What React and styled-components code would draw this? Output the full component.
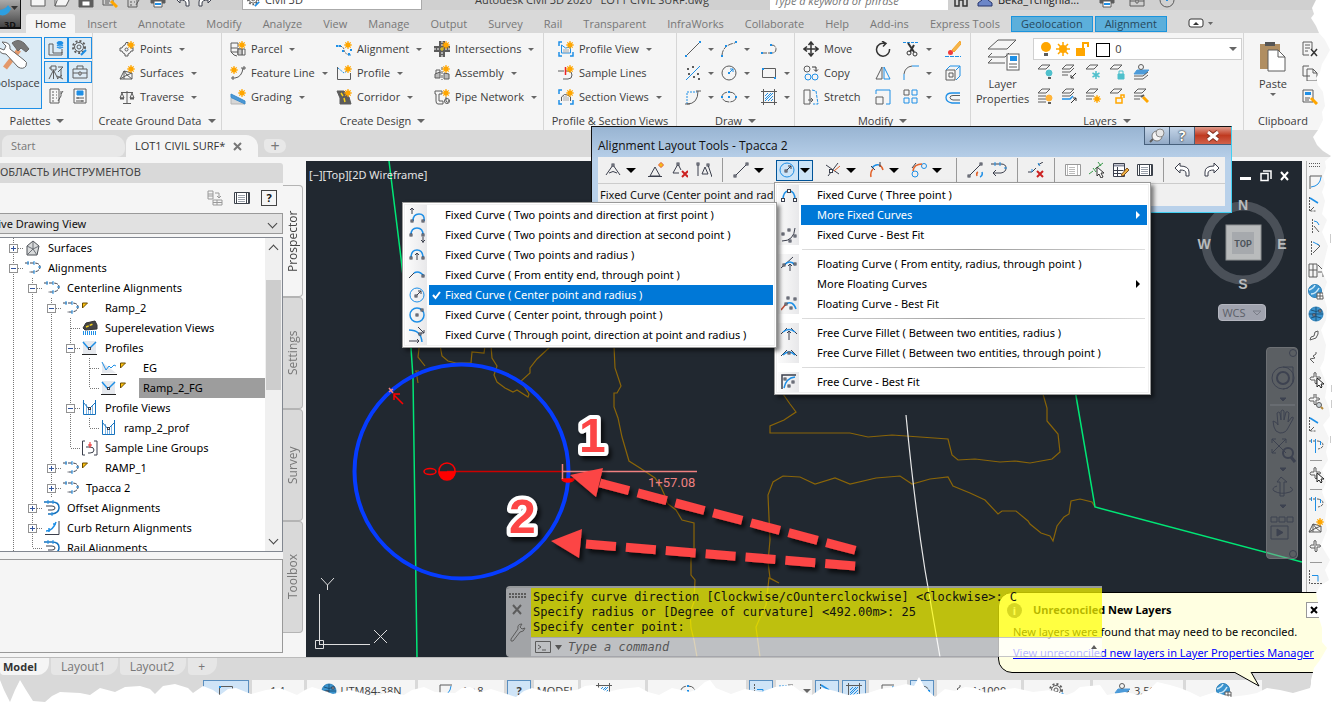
import React from 'react';
import styled, { createGlobalStyle, css } from 'styled-components';

const GRAY = '#5c5c5c';
const BLUE = '#1e8fe6';
const ORANGE = '#ffa600';
const TEAL = '#4fc0cc';
const INK = '#3b3f4c';

/* Icons */
const Burst = ({ x = 12, y = 4 }) => (
	<g transform={`translate(${x} ${y})`} stroke={ORANGE} strokeWidth="1.2">
		<circle r="2" fill={ORANGE} />
		<path d="M0-4V4M-4 0H4M-2.7-2.7L2.7 2.7M-2.7 2.7L2.7-2.7" />
	</g>
);

const Dots = ({ at, color = INK, size = 3 }) =>
	at.map(([x, y]) => (
		<rect
			key={`${x}-${y}`}
			x={x - size / 2}
			y={y - size / 2}
			width={size}
			height={size}
			fill="#fff"
			stroke={color}
		/>
	));

const BlueDots = ({ at }) =>
	at.map(([x, y]) => (
		<rect key={`${x}-${y}`} x={x - 1} y={y - 1} width="2" height="2" fill={BLUE} stroke="none" />
	));

const sheet = 'M5 1H13L9 5H1Z';

const icons = {
	points: (
		<>
			<path d="M7 1.500h2V4a4 4 0 0 1 3 3h2v3h-2a4 4 0 0 1-3 3v2H6v-2a4 4 0 0 1-3-3H1V7h2a4 4 0 0 1 3-3z" />
			<circle cx="7.500" cy="8.500" r="1.500" />
			<Burst />
		</>
	),
	surfaces: (
		<>
			<path d="M1 14L5 6l8 2v6zM5 6l3 4 5-2M8 10l5 4M8 10l-7 4M5 6V14" />
			<Burst />
		</>
	),
	traverse: (
		<>
			<path d="M8 2V14M4 14.500h8M2 3.500h12M3 4L1 9h4zM13 4l-2 5h4z" />
			<path d="M1 9.500h4M11 9.500h4" strokeWidth="2" />
		</>
	),
	parcel: (
		<>
			<path d="M1 2h7v4M1 2v9q3 4 6 4M1 7h7v7M8 8h7v6h-3M12 8v6M1 11h7" />
			<path d="M8 8h4v6H8z" fill="#c9c9c9" />
			<Burst />
		</>
	),
	feature: (
		<>
			<path d="M1 13h4q7-1 8-10M11 3h5M3 11v4M14 1v4" />
			<Burst x={4} y={5} />
		</>
	),
	grading: (
		<>
			<path d="M1 9v6h14" fill="#d6d6d6" stroke="#b5b5b5" />
			<path d="M1 5l14 7v3L1 8.500z" fill="#4a98d6" stroke="#3d8bc8" />
			<Burst />
		</>
	),
	alignment: (
		<>
			<path d="M4 5q4 1 4 4t5 5" strokeDasharray="2 1" />
			<BlueDots at={[[1, 5], [4, 5], [7, 10], [13, 13], [15, 9]]} />
			<path d="M0 5h5M12 14h3" stroke={BLUE} />
			<Burst />
		</>
	),
	profile: (
		<>
			<path d="M1.500 2v12.500h13V8" />
			<path d="M2 3l6 5 3-2" stroke={BLUE} strokeDasharray="2 1" />
			<Burst />
		</>
	),
	corridor: (
		<>
			<path d="M1 2h7l5 6 2 7H4V9z" fill={GRAY} />
			<path d="M5 4l2 3M8 9l1 4" stroke="#f6d31c" strokeWidth="1.500" />
			<Burst />
		</>
	),
	intersections: (
		<>
			<path d="M8 0v16M0 8h16" strokeWidth="6" />
			<path d="M8 0v5M8 11v5M0 8h5M11 8h5" stroke="#fff" strokeDasharray="2 1" />
			<path d="M8 6v4M6 8h4" stroke="#f6d31c" />
			<Burst />
		</>
	),
	assembly: (
		<>
			<path d="M8 2v13" strokeDasharray="3 1" />
			<path d="M1 9l5-2v6H1zM10 8l5 1v5h-5z" fill="#bbb" />
			<path d="M2 9V5h4v3" />
			<Burst />
		</>
	),
	pipe: (
		<>
			<path d="M1 2h7v3H5v7h4v3H4q-2 0-2-3V5H1zM12 8v4q2 3 3-1" />
			<circle cx="13" cy="12" r="2.500" />
			<Burst />
		</>
	),
	profileView: (
		<>
			<path d="M1 5V1h3M1 11v4h3M12 15h3v-4" stroke={BLUE} strokeWidth="1.500" />
			<path d="M3.500 12V4l4 3 5-1v6z" stroke={BLUE} />
			<path d="M6 8v4M8 8v4M10 8v4" stroke="#aaa" />
			<Burst />
		</>
	),
	sampleLines: (
		<>
			<path d="M0 6h6M7 6h3q4 0 4 4t-4 4H5" />
			<path d="M7.500 2v8" stroke="#e22" strokeWidth="1.500" />
			<Burst />
		</>
	),
	sectionView: (
		<>
			<path d="M1 5V1h3M1 11v4h3M12 15h3v-4" stroke={BLUE} strokeWidth="1.500" />
			<path d="M3.500 12V8q3-4 6-2l3 2v4" />
			<path d="M6 7v5M8 7v5M10 8v4" stroke="#aaa" />
			<Burst />
		</>
	),
	line: (
		<>
			<path d="M2 14L14 2" />
			<BlueDots at={[[1, 15], [15, 1]]} />
		</>
	),
	arc: (
		<>
			<path d="M1 14Q2 4 14 2" strokeDasharray="5 1" />
			<BlueDots at={[[1, 15], [5, 5], [15, 1]]} />
		</>
	),
	polyline: (
		<>
			<path d="M1 12h9M10 4q5 0 5 4t-4 4" strokeDasharray="5 1" />
			<BlueDots at={[[1, 12], [10, 4], [10, 12]]} />
		</>
	),
	construct: (
		<>
			<path d="M1 15L15 1" stroke={BLUE} />
			<path d="M2 4h2M3 9h2M7 2h2M8 12h2M12 9h2M13 14h2" strokeWidth="2" />
		</>
	),
	circle: (
		<>
			<circle cx="8" cy="8" r="7" />
			<path d="M8 8l4-4M9 4h3v3" stroke={BLUE} />
			<BlueDots at={[[8, 8]]} />
		</>
	),
	rect: (
		<>
			<path d="M1.500 3.500h13v9h-13z" />
			<BlueDots at={[[2, 4], [14, 13]]} />
		</>
	),
	spline: (
		<>
			<path d="M2 15V3h10" stroke={BLUE} strokeDasharray="2 1" />
			<path d="M2 15q11 0 11-13M0 15h5M11 2h5" />
		</>
	),
	ellipse: (
		<>
			<ellipse cx="8" cy="8" rx="7" ry="5" strokeDasharray="8 1" />
			<BlueDots at={[[8, 8], [1, 8], [15, 8], [8, 3]]} />
		</>
	),
	hatch: (
		<>
			<path d="M2.500 0v16M13.500 0v16M0 2.500h16M0 13.500h16" />
			<path d="M4 7l3-3M4 10l6-6M4 12l8-8M7 12l5-5M10 12l2-2" stroke={BLUE} />
		</>
	),
	move: (
		<path
			d="M8 1v14M1 8h14M5.500 4L8 1l2.500 3M5.500 12L8 15l2.500-3M4 5.500L1 8l3 2.500M12 5.500L15 8l-3 2.500"
			stroke="#333"
			strokeWidth="1.500"
		/>
	),
	copy: (
		<>
			<circle cx="4" cy="4" r="3" />
			<circle cx="5" cy="12" r="3" stroke={BLUE} />
			<circle cx="12" cy="12" r="3" stroke={BLUE} />
			<path d="M9 2h4v4M11 4.500l2 2 2-2" stroke="#333" />
		</>
	),
	stretch: (
		<>
			<path d="M1 1h6v14H1zM5 11h5M8 9l2 2-2 2" />
			<path d="M9 1l4 1 2 13h-5" stroke={BLUE} strokeDasharray="3 1" />
		</>
	),
	rotate: <path d="M10 2.500A6.500 6.500 0 1 0 14.500 8M7 0l4 2.500-3 3" stroke="#333" strokeWidth="1.500" />,
	mirror: (
		<>
			<path d="M7 2v12H1z" />
			<path d="M9 2v12h6z" stroke={BLUE} />
		</>
	),
	scale: (
		<>
			<path d="M1 8h7v7H1z" />
			<path d="M1 5V1h14v14h-4" stroke={BLUE} />
		</>
	),
	trim: (
		<>
			<path d="M0 1.500h16" stroke={BLUE} strokeDasharray="3 1" />
			<path d="M5 2l6 9M11 4L7 11" stroke="#333" strokeWidth="2" />
			<circle cx="6" cy="12" r="2" stroke="#333" />
			<circle cx="12" cy="13" r="2" stroke="#333" />
		</>
	),
	fillet: (
		<>
			<path d="M1 9Q2 2 9 1" />
			<path d="M1 15V9M9 1h7" stroke={BLUE} />
		</>
	),
	array: (
		<>
			<path d="M1 1h5v5H1z" />
			<path d="M9 1h5v5H9zM1 9h5v5H1zM9 9h5v5H9z" stroke={BLUE} />
		</>
	),
	erase: (
		<>
			<path d="M0 15.500h16" stroke={BLUE} strokeDasharray="4 1" />
			<path d="M15 0L7 9l2 2 7-8z" fill="#f5b54a" stroke="#f5a52a" />
			<circle cx="5.500" cy="11.500" r="2.500" fill="#f03a3a" stroke="none" />
		</>
	),
	explode: (
		<>
			<path d="M1 5h9v10H1z" />
			<path d="M1 5l4-4h10v10l-4 4M15 1l-4 4" stroke={BLUE} />
			<path d="M4 8h4v4H4z" />
		</>
	),
	offset: (
		<>
			<path d="M15 4H7Q1 4 1 8.500T7 14h8" stroke={BLUE} strokeWidth="1.300" />
			<path d="M15 6.500H8q-3 0-3 2t3 2.500h7" />
		</>
	),
	layBulb: (
		<>
			<path d={sheet} />
			<circle cx="12" cy="9" r="3" fill={TEAL} stroke={TEAL} />
			<path d="M11 14h3" strokeWidth="2" />
		</>
	),
	layArrow: (
		<>
			<path d={sheet} />
			<path d="M1 8h8l4-4M1 11h6" />
			<path d="M15 9l-5 5M10 11v3h3" stroke="#333" />
		</>
	),
	layFreeze: (
		<>
			<path d={sheet} />
			<path d="M11 7v8M7.500 9l7 4M7.500 13l7-4" stroke={TEAL} strokeWidth="1.500" />
		</>
	),
	layLock: (
		<>
			<path d={sheet} />
			<path d="M9 10h6v5H9z" fill={TEAL} stroke={TEAL} />
			<path d="M10 10V7h4v3" stroke={TEAL} />
		</>
	),
	layMatch: (
		<>
			<path d="M4 6h12l-4 4H1z" fill="#4d9bd9" stroke="#4d9bd9" />
			<path d="M1 12h9l5-4M1 15h9l5-4" />
			<circle cx="8" cy="3" r="2.500" />
		</>
	),
	layOn: (
		<>
			<path d="M5 1H13L9 5H1ZM1 8h8M1 11h8M1 14h8" />
			<circle cx="12" cy="10" r="3" fill="#ffb43a" stroke="#ffb43a" />
			<path d="M11 15h3" strokeWidth="2" />
		</>
	),
	layWalk: (
		<>
			<path d={sheet} />
			<path d="M1 8h8l4-4" />
			<path d="M1 11h8l3-3" stroke={BLUE} strokeWidth="1.500" />
			<path d="M10 15l5-5M12 10h3v3" stroke="#333" />
		</>
	),
	laySun: (
		<>
			<path d="M5 1H13L9 5H1ZM1 8h8M1 11h6" />
			<Burst x={12} y={11} />
		</>
	),
	layUnlock: (
		<>
			<path d={sheet} />
			<path d="M7 10h6v5H7zM12 10V7h3v3" stroke={ORANGE} strokeWidth="1.500" />
		</>
	),
	layBrush: (
		<>
			<path d="M5 1H13L9 5H1ZM1 8h8M1 11h6" />
			<path d="M10 9l5 5" stroke={ORANGE} strokeWidth="3" />
			<path d="M8 9l3-2" strokeWidth="2" />
		</>
	),
	cut: (
		<>
			<path d="M1 1h9v7M1 1v13h6M3 4h5M3 7h5M3 10h3" />
			<path d="M9 8l6 7M15 8l-6 7" stroke="#333" strokeWidth="1.500" />
		</>
	),
	copyClip: <path d="M8 11H1V1h6M5 4h6l4 4v8H5zM11 4v4h4" />,
	matchProp: (
		<>
			<path d="M1 1h10v12H1z" />
			<path d="M3 3h6v3H3z" fill={BLUE} stroke="none" />
			<path d="M3 9h5M3 11h4" />
			<path d="M9 9l6 6" stroke={ORANGE} strokeWidth="3" />
		</>
	),
	file: <path d="M1 2h14v12H1z" fill="#f5f5f5" />,
	folder: <path d="M1 14L4 6h12l-4 8zM1 14V3h5" fill="#f5f5f5" />,
	disk: (
		<>
			<path d="M1 1h14v14H1z" fill={GRAY} />
			<path d="M4 9h8v5H4z" fill="#fff" />
		</>
	),
	plotter: (
		<>
			<path d="M1 5h14v6H1z" fill={GRAY} />
			<path d="M4 9h8v6H4z" fill="#fff" />
			<path d="M5 12h6" stroke={BLUE} strokeWidth="2" />
		</>
	),
	binoculars: <path d="M2 14V8l2-5h2v11zM10 14V3h2l2 5v6zM6 8h4" stroke="#333" strokeWidth="1.500" />,
	person: <path d="M8 3l3 5 4 3v3H1v-3l4-3z" fill="#6c86c8" stroke="#26346c" />,
	arrange: (
		<>
			<path d="M1 1h5v8H1zM1 4h5M1 6h5M6 10h9v5H6zM10 10v5M6 12.500h9" stroke="#999" />
			<path d="M8 3h4v4M10 6l2 2 2-2" stroke="#999" />
		</>
	),
	prospector: (
		<>
			<path d="M1 4h4v9h9V9M1 4v11h13v-3" />
			<ellipse cx="12" cy="3" rx="3" ry="1.500" fill={BLUE} stroke={BLUE} />
			<path d="M9 5q3 2 6 0M9 7q3 2 6 0" stroke={BLUE} strokeWidth="1.500" />
		</>
	),
	gear: (
		<>
			<circle cx="7" cy="7" r="6" strokeDasharray="2 2" strokeWidth="2" />
			<circle cx="7" cy="7" r="4.500" />
			<circle cx="7" cy="7" r="2" />
			<path d="M9 15l5-5" stroke={BLUE} strokeWidth="2" />
		</>
	),
	survey: <path d="M3 2h5v4H3zM5.500 6v9M5 7L1 15M6 7l4 8M1 4h2M10 3h5l-2 2v9M10 8l5-5M9 12l6 3M9 15l5-4" />,
	toolbox: (
		<>
			<path d="M1 5h14v9H1zM5 5V2h6v3M1 9h14" />
			<path d="M7 8h2v3H7z" fill="#fff" />
		</>
	),
	calc: <path d="M2 1h9v14H2zM4 4h2M8 4h1M4 7h2M8 7h1M4 10h2M8 10h1M4 13h2M13 3v5l-3 5M15 3l-2 3" />,
	propsPal: (
		<>
			<path d="M2 1h12v14H2z" />
			<path d="M5 3h6v4H5z" fill={BLUE} stroke={BLUE} />
			<path d="M4 10h8M4 13h8M6 9v2M10 12v2" />
		</>
	),
	/* tree */
	surface: (
		<>
			<path d="M8 1l6 5-2 9H2V6z" fill="#d9dbdc" stroke="#4b4f55" />
			<path d="M8 1v8M8 9l6-3M8 9L2 6M8 9l4 6M8 9l-6 6" stroke="#6a6e74" />
		</>
	),
	align: (
		<>
			<path d="M0 3h9q6 0 6 4t-6 5H4" stroke={INK} strokeDasharray="4 1" />
			<path d="M3 1v4M9 1v4M9 10v4M13 7h3" stroke={BLUE} />
		</>
	),
	superelev: (
		<>
			<path d="M1 8l3-5 9-2 2 4v4L3 10z" fill="#444" stroke="#333" />
			<path d="M4 7l7-3" stroke="#f6d31c" strokeDasharray="3 1" strokeWidth="1.500" />
			<path d="M1.500 15V11M3.500 15V11M5.500 15V11M7.500 15V11M9.500 15V11M11.500 15V11M13.500 15V11" stroke={BLUE} />
		</>
	),
	prof: (
		<>
			<path d="M1 1h13v13H1z" fill="#e6e9ee" stroke="none" />
			<path d="M1 2l6 7 7-7" stroke={BLUE} strokeWidth="1.500" />
			<path d="M0 14.500h15" stroke="#222" />
			<Dots at={[[7.5, 8.5]]} size={2} />
		</>
	),
	eg: (
		<>
			<path d="M1 2v11h14" fill="#e6e9ee" stroke="none" />
			<path d="M1 2l4 8 3-4 2 2 3-3 2 1" stroke={BLUE} />
			<path d="M0 14.500h16" stroke="#222" />
		</>
	),
	profView: (
		<>
			<path d="M4.500 4v10M6.500 7v7M8.500 8v6M10.500 6v8" stroke="#7fb4e2" />
			<path d="M1 2l6 7 7-7M1.500 0v14.500h12V0" stroke="#1672bd" />
			<Dots at={[[7.5, 8.5]]} size={2} />
		</>
	),
	samples: (
		<>
			<path d="M3 1H.5v14H3M12 1h3v14h-3" stroke={INK} />
			<path d="M4 7h4q4 0 4 3t-4 3H6" stroke={INK} />
			<path d="M8 2v6M6 5h4" stroke="#e22" />
		</>
	),
	offsetAl: (
		<>
			<path d="M0 2h8q7 0 7 5.500T8 14H4" stroke="#1672bd" strokeWidth="1.500" />
			<path d="M2 6h6q3 0 3 2t-3 2H4" stroke={INK} />
			<path d="M4 0v4M9 0v4M8 12v4" stroke={BLUE} />
		</>
	),
	curb: (
		<>
			<path d="M15 1v13.500H1" stroke={INK} />
			<path d="M2 11q7 0 10-9M5 8v4M9 4h3" stroke={BLUE} strokeWidth="1.500" />
		</>
	),
	/* layout tools */
	tangent: (
		<>
			<path d="M1 13L8 3l7 10M4 11q4-3 8 0" stroke={INK} />
			<Dots at={[[8, 3]]} size={2} />
		</>
	),
	piInsert: (
		<>
			<path d="M2 14L7 5l5 9zM0 14.500h14" stroke={INK} />
			<circle cx="13" cy="3" r="1.500" fill="#f6d31c" stroke="#f08a1a" />
			<path d="M13 0v1M13 5v1M10 3h1M15 3h1M11 1l.5.5M15 1l-.5.5M11 5l.5-.5M15 5l-.5-.5" stroke="#e24a1a" />
		</>
	),
	piDelete: (
		<>
			<path d="M1 11L6 2l3 6M1 11h6" stroke={INK} />
			<Dots at={[[6, 2]]} size={2} />
			<path d="M10 9l6 6M16 9l-6 6" stroke="#c22" strokeWidth="2" />
		</>
	),
	piBreak: (
		<>
			<path d="M2 2v12M6 12L9 5l3 7zM12 3l4 12" stroke={INK} />
			<Dots at={[[2, 2], [12, 3]]} size={2} />
		</>
	),
	segment: (
		<>
			<path d="M2 14L14 2" stroke={INK} />
			<Dots at={[[2, 14], [14, 2]]} size={2} />
		</>
	),
	curve: (
		<>
			<circle cx="8" cy="8" r="7" stroke={BLUE} />
			<path d="M7 9l5-5M9 4h3v3" stroke={INK} />
			<Dots at={[[7, 9]]} size={2} />
		</>
	),
	floatLine: (
		<>
			<path d="M1 3l13 9M3 14L13 1" stroke={INK} />
			<path d="M9 9l6-5" stroke="#e2622a" />
			<Dots at={[[6, 9]]} size={3} />
		</>
	),
	floatCurve: (
		<>
			<path d="M4 6q3-4 7-3" stroke={BLUE} strokeWidth="1.500" />
			<path d="M3 15q-1-5 2-8M11 3q3 1 4 5" stroke="#e2622a" strokeWidth="1.500" />
			<path d="M3 4l4 4M12 0v5" stroke={INK} />
		</>
	),
	freeSpiral: (
		<>
			<circle cx="4" cy="12" r="3" stroke={BLUE} />
			<circle cx="13" cy="4" r="2.500" stroke={BLUE} />
			<path d="M2 9q1-7 9-7" stroke="#e2622a" strokeWidth="1.500" />
			<path d="M1 6l4-5" stroke={INK} />
		</>
	),
	convert: (
		<>
			<path d="M2 14L14 2" stroke={INK} />
			<Dots at={[[2, 14], [14, 2]]} size={2} />
			<path d="M10 14q-1-3 1-4" stroke="#e2622a" strokeWidth="1.500" />
			<path d="M13 15q3-1 2-5" stroke={BLUE} strokeWidth="1.500" />
		</>
	),
	reverse: (
		<>
			<path d="M0 2h10q5 0 5 4t-5 5H2M5 8l-3 3 3 3" stroke={INK} />
			<path d="M4 0v4M9 0v4M13 6h3" stroke={BLUE} />
		</>
	),
	deleteSub: (
		<>
			<path d="M0 10h4l4-4M10 3l5-3" stroke={INK} />
			<path d="M4 7v3M10 1l2 3" stroke={BLUE} />
			<path d="M9 9l6 6M15 9l-6 6" stroke="#c22" strokeWidth="2" />
		</>
	),
	pageDim: (
		<>
			<path d="M.5 2.500h15v11H.5z" fill="#fff" stroke="#999" />
			<path d="M4 5.500h6M4 7.500h6M4 9.500h6M4 11.500h6M2.500 3v10M12.500 3v10" stroke="#bbb" />
		</>
	),
	pick: (
		<>
			<path d="M0 12l4-3M6 7l8-6M9 0l3 4M4 6l3 4" stroke="#3a9a4a" />
			<path d="M8 5v9l2-2 2 4 2-1-2-4h3z" fill="#fff" stroke="#333" />
		</>
	),
	gridEdit: (
		<>
			<path d="M.5 1.500h11v13H.5zM.5 8.500h10M.5 11.500h8M4.500 5v9" fill="#fff" stroke={INK} />
			<path d="M1 3.500h10" stroke="#8a8fa0" strokeWidth="2" />
			<path d="M8 13l6-7 2 2-6 6z" fill="#f2b343" stroke="#80501a" />
		</>
	),
	panorama: (
		<>
			<path d="M.5 2.500h15v11H.5z" fill="#fff" stroke="#3d434c" />
			<path d="M4 5.500h7M4 7.500h7M4 9.500h7M4 11.500h7" stroke="#9aa1ab" />
			<path d="M2.500 3v10M12.500 3v10M14.500 3v10" stroke="#3d434c" />
		</>
	),
	undo: <path d="M1 6l5-5v3q9 0 9 6v4h-3v-3q0-3-6-3v3z" fill="#fff" stroke={INK} />,
	redo: <path d="M15 6l-5-5v3Q1 4 1 10v4h3v-3q0-3 6-3v3z" fill="#fff" stroke={INK} />,
	/* menus */
	threePt: (
		<>
			<path d="M2 13Q2 4 8 4t6 9" stroke={BLUE} strokeWidth="1.500" />
			<Dots at={[[2, 13], [8, 4], [14, 13]]} />
		</>
	),
	bestFit: (
		<>
			<path d="M1 14q12 0 13-13" stroke={INK} />
			<Dots at={[[2, 7], [8, 3], [9, 14], [14, 9]]} size={2} />
		</>
	),
	floatThrough: (
		<>
			<path d="M0 12L12 1" stroke={INK} />
			<path d="M3 9q6-6 11 0" stroke={BLUE} strokeWidth="1.500" />
			<path d="M9 15V8M7 10l2-2 2 2" stroke={INK} />
			<Dots at={[[3, 9], [14, 8]]} size={2} />
		</>
	),
	floatBest: (
		<>
			<path d="M0 14l5-6" stroke="#c0503a" strokeWidth="1.500" />
			<path d="M5 8q7-4 10 5" stroke={BLUE} strokeWidth="1.500" />
			<Dots at={[[7, 2], [14, 3], [5, 8], [10, 12]]} size={2} />
		</>
	),
	freeRadius: (
		<>
			<path d="M0 9l6-6M10 3l6 6M8 15V6M6 8l2-2 2 2" stroke={INK} />
			<path d="M2 7q6-5 12 0" stroke={BLUE} strokeWidth="1.500" />
		</>
	),
	freeThrough: (
		<>
			<path d="M0 11l6-6M10 5l6 6" stroke={INK} />
			<path d="M2 10q6-6 12 0" stroke={BLUE} strokeWidth="1.500" />
			<Dots at={[[8, 8]]} size={2} />
		</>
	),
	freeBest: (
		<>
			<path d="M1 15V1h14" stroke={INK} strokeWidth="1.500" />
			<path d="M3 14Q5 4 14 3" stroke={BLUE} strokeWidth="1.500" />
			<Dots at={[[4, 5], [8, 12], [12, 8]]} size={2} />
		</>
	),
	firstPt: (
		<>
			<path d="M4 14Q4 7 10 7t5 7" stroke={BLUE} strokeWidth="1.500" />
			<path d="M3 7V1M1 3l2-2 2 2" stroke={INK} />
			<Dots at={[[3, 14], [14, 14]]} size={2} />
		</>
	),
	secondPt: (
		<>
			<path d="M2 8Q2 1 8 1t6 7" stroke={BLUE} strokeWidth="1.500" />
			<path d="M14 10v6M12 13l2 2 2-2" stroke={INK} />
			<Dots at={[[2, 8], [14, 8]]} size={2} />
		</>
	),
	radiusPt: (
		<>
			<path d="M2 11Q2 3 8 3t6 8" stroke={BLUE} strokeWidth="1.500" />
			<path d="M8 13V6M6 8l2-2 2 2" stroke={INK} />
			<Dots at={[[2, 11], [14, 11]]} size={2} />
		</>
	),
	entityEnd: (
		<>
			<path d="M0 11l6-6" stroke={INK} />
			<path d="M5 6q5-3 10 3" stroke={BLUE} strokeWidth="1.500" />
			<Dots at={[[14, 9]]} size={2} />
		</>
	),
	centerThrough: (
		<>
			<circle cx="8" cy="8" r="7" stroke={BLUE} strokeWidth="1.500" />
			<Dots at={[[8, 8], [13, 3]]} size={2} />
		</>
	),
	throughDir: (
		<>
			<path d="M0 3q12 0 13 12" stroke={BLUE} strokeWidth="1.500" />
			<path d="M9 0l6 6M15 3v3h-3M0 14h10M8 12l2 2-2 2" stroke={INK} />
			<Dots at={[[11, 7]]} size={2} />
		</>
	),
	/* side toolbar */
	sideA: (
		<>
			<path d="M2 15V2h12" />
			<path d="M3 13q9-1 10-10" stroke={BLUE} />
		</>
	),
	sideB: (
		<>
			<path d="M1.500 1v14h7" strokeDasharray="2 1" />
			<path d="M2 2l8 5" stroke={BLUE} strokeWidth="1.500" />
			<path d="M2 15l4-4" />
		</>
	),
	sideC: (
		<>
			<path d="M4.500 1v14" strokeDasharray="2 1" />
			<path d="M6 3q4 0 5 4" stroke={BLUE} />
			<path d="M6 8l5 6" />
		</>
	),
	sideD: (
		<>
			<path d="M3.500 1v14" strokeDasharray="2 1" />
			<path d="M5 13l7-7-3-2" />
			<path d="M5 2l6 3" stroke={BLUE} />
		</>
	),
	sideGrid: <path d="M1 2h8v13H1zM1 8h8M5 2v13M10 3l4 4M10 10h5v5" />,
	globe: (
		<>
			<circle cx="7" cy="7" r="6.500" fill="#3b94cf" stroke="#2b7fb8" />
			<path d="M1 6q5-2 6-5M3 10q5 0 8-6" stroke="#cfe9f7" strokeWidth="1.500" />
			<path d="M9 9h6v6H9zM12 9v6M9 12h6" fill="#fff" />
		</>
	),
	globeWire: (
		<>
			<circle cx="8" cy="8" r="7" fill="#3b94cf" stroke="#2b7fb8" />
			<path d="M1 8h14M8 1v14M3 4q5 3 10 0M3 12q5-3 10 0" stroke="#1c567e" />
			<Dots at={[[6, 9], [12, 5]]} size={2} />
		</>
	),
	sideLink: <path d="M2 12l1-3 3-1 1-4 3-1v3l-2 4-3 1z" />,
	sideNode: <path d="M8 2v2L5 6l2 2-5 1 4 4" />,
	sideStar: <path d="M6 1q1-1 2 0v4h4q1 1 0 2H9v4q-1 2-2 0V8H3Q1 7 3 5h3zM7 5v3" />,
	sidePick: (
		<>
			<path d="M6 1q1-1 2 0v4h4q1 1 0 2H9v4q-1 2-2 0V8H3Q1 7 3 5h3z" />
			<path d="M9 6v9l2-2 2 3 1-1-1-3h3z" fill="#fff" stroke="#222" />
		</>
	),
	sideZoom: (
		<>
			<path d="M6 0q1-1 2 0v4h3q1 1 0 2H8v4q-1 2-2 0V7H2Q0 6 2 4h4z" />
			<circle cx="11" cy="11" r="2.500" fill="#cbd3d8" />
			<path d="M13 13l2 2" stroke="#b58a3a" strokeWidth="2" />
		</>
	),
	sideAlign: (
		<>
			<path d="M1 3h9M10 3q5 1 5 4t-5 4" strokeDasharray="3 1" />
			<path d="M7.500 1v14M3.500 1v4M12.500 3v4" stroke={BLUE} />
		</>
	),
	sideRect: (
		<>
			<path d="M1.500 1v13.500h13" strokeDasharray="2 1" />
			<path d="M4 6.500h6v6" stroke={BLUE} />
		</>
	),
};

const Icon = ({ name, size = 16 }) => (
	<Glyph width={size} height={size} viewBox="0 0 16 16" aria-hidden="true">
		{icons[name]}
	</Glyph>
);

/* Data */
const ribbonTabs = [
	'Home', 'Insert', 'Annotate', 'Modify', 'Analyze', 'View', 'Manage', 'Output', 'Survey',
	'Rail', 'Transparent', 'InfraWorks', 'Collaborate', 'Help', 'Add-ins', 'Express Tools',
];

const groundItems = [['points', 'Points', 1], ['surfaces', 'Surfaces', 1], ['traverse', 'Traverse', 1]];

const designItems = [
	['parcel', 'Parcel', 1], ['alignment', 'Alignment', 1], ['intersections', 'Intersections', 1],
	['feature', 'Feature Line', 1], ['profile', 'Profile', 1], ['assembly', 'Assembly', 1],
	['grading', 'Grading', 1], ['corridor', 'Corridor', 1], ['pipe', 'Pipe Network', 1],
];

const profileItems = [['profileView', 'Profile View', 1], ['sampleLines', 'Sample Lines', 0], ['sectionView', 'Section Views', 1]];

const drawTools = [
	['line', 1], ['arc', 1], ['polyline', 0],
	['construct', 1], ['circle', 1], ['rect', 1],
	['spline', 1], ['ellipse', 1], ['hatch', 1],
];

const modifyTools = [
	['move', 'Move'], ['rotate'], ['trim', '', 1], ['erase'],
	['copy', 'Copy'], ['mirror'], ['fillet', '', 1], ['explode'],
	['stretch', 'Stretch'], ['scale'], ['array', '', 1], ['offset'],
];

const layerTools = [
	'layBulb', 'layArrow', 'layFreeze', 'layLock', 'layMatch',
	'layOn', 'layWalk', 'laySun', 'layUnlock', 'layBrush',
];

/* each letter of cells draws one 19px column of tree lines */
const treeRows = [
	{ cells: '+', icon: 'surface', text: 'Surfaces' },
	{ cells: '-', icon: 'align', text: 'Alignments' },
	{ cells: '|-', icon: 'align', text: 'Centerline Alignments' },
	{ cells: '||-', icon: 'align', flag: true, text: 'Ramp_2' },
	{ cells: '|||T', icon: 'superelev', text: 'Superelevation Views' },
	{ cells: '|||-', icon: 'prof', text: 'Profiles' },
	{ cells: '||||T', icon: 'eg', flag: true, text: 'EG' },
	{ cells: '||||L', icon: 'prof', flag: true, text: 'Ramp_2_FG', selected: true },
	{ cells: '|||-', icon: 'profView', text: 'Profile Views' },
	{ cells: '||||L', icon: 'profView', text: 'ramp_2_prof' },
	{ cells: '|||L', icon: 'samples', text: 'Sample Line Groups' },
	{ cells: '||+', icon: 'align', flag: true, text: 'RAMP_1' },
	{ cells: '||+', icon: 'align', text: 'Tpacca 2' },
	{ cells: '|+', icon: 'offsetAl', text: 'Offset Alignments' },
	{ cells: '|+', icon: 'curb', text: 'Curb Return Alignments' },
	{ cells: '|L', icon: 'offsetAl', text: 'Rail Alignments' },
];

const curveMenu = [
	{ icon: 'threePt', text: 'Fixed Curve ( Three point )' },
	{ text: 'More Fixed Curves', sub: true, active: true },
	{ icon: 'bestFit', text: 'Fixed Curve - Best Fit' },
	null,
	{ icon: 'floatThrough', text: 'Floating Curve ( From entity, radius, through point )' },
	{ text: 'More Floating Curves', sub: true },
	{ icon: 'floatBest', text: 'Floating Curve - Best Fit' },
	null,
	{ icon: 'freeRadius', text: 'Free Curve Fillet ( Between two entities, radius )' },
	{ icon: 'freeThrough', text: 'Free Curve Fillet ( Between two entities, through point )' },
	null,
	{ icon: 'freeBest', text: 'Free Curve - Best Fit' },
];

const fixedMenu = [
	{ icon: 'firstPt', text: 'Fixed Curve ( Two points and direction at first point )' },
	{ icon: 'secondPt', text: 'Fixed Curve ( Two points and direction at second point )' },
	{ icon: 'radiusPt', text: 'Fixed Curve ( Two points and radius )' },
	{ icon: 'entityEnd', text: 'Fixed Curve ( From entity end, through point )' },
	{ icon: 'curve', text: 'Fixed Curve ( Center point and radius )', active: true, checked: true },
	{ icon: 'centerThrough', text: 'Fixed Curve ( Center point, through point )' },
	{ icon: 'throughDir', text: 'Fixed Curve ( Through point, direction at point and radius )' },
];

const layoutTools = [
	['tangent', 'split'], ['piInsert'], ['piDelete'], ['piBreak'], ['|'],
	['segment', 'split'], ['curve', 'on'], ['floatLine', 'split'], ['floatCurve', 'split'],
	['freeSpiral', 'split'], ['|'], ['convert'], ['reverse'], ['|'], ['deleteSub'], ['|'],
	['pageDim'], ['pick'], ['gridEdit'], ['panorama'], ['|'], ['undo', 'wide'], ['redo'],
];

const sideTools = [
	'sideA', 'sideB', 'sideC', 'sideD', 'sideGrid', 'globe', 'globeWire', 'sideLink',
	'sideNode', 'sidePick', 'sideZoom', 'sideB', 'sideAlign', '|', 'sidePick', '|', 'sideAlign',
	'surfaces', 'sideStar', '|', 'sideRect', 'sideNode',
];

const statusItems = [
	{ w: 46, icon: 'rect', on: true, text: '' },
	{ w: 52, text: '1:1' },
	{ w: 108, icon: 'globeWire', text: 'UTM84-38N' },
	{ w: 86, icon: 'sideA', text: '-1:+8' },
	{ w: 24, text: '?', on: true, bold: true },
	{ w: 44, text: 'MODEL' },
	{ w: 64, icon: 'hatch', arrow: true },
	{ w: 98, icon: 'ellipse', arrow: true },
	{ w: 24, icon: 'sideRect', on: true },
	{ w: 34, icon: 'spline', arrow: true },
	{ w: 24, icon: 'sideB', on: true },
	{ w: 24, icon: 'hatch', on: true },
	{ w: 38, icon: 'sideA' },
	{ w: 24, icon: 'ellipse', on: true },
	{ w: 84, icon: 'sideNode', text: '1:1000' },
	{ w: 66, icon: 'gear' },
	{ w: 90, icon: 'layMatch', text: '3.500' },
	{ w: 76, icon: 'globe' },
];

/* Parts */
const RibbonItem = ({ item: [icon, text, arrow] }) => (
	<ToolButton>
		<Icon name={icon} />
		{text}
		{arrow ? <Arrow /> : null}
	</ToolButton>
);

const TreeCell = ({ kind }) => {
	const box = kind === '+' || kind === '-';
	return (
		<Glyph width="19" height="20" viewBox="0 0 19 20" aria-hidden="true">
			<path d={kind === 'L' ? 'M9.500 0V10' : 'M9.500 0V20'} stroke="#777" strokeDasharray="1 1" />
			{kind !== '|' && <path d="M10 10.500H19" stroke="#777" strokeDasharray="1 1" />}
			{box && <rect x="5.500" y="6.500" width="8" height="8" fill="#fff" stroke="#929292" />}
			{box && <path d={kind === '+' ? 'M7 10.500h5M9.500 8v5' : 'M7 10.500h5'} stroke="#32549c" />}
		</Glyph>
	);
};

const Menu = ({ items, label, className }) => (
	<MenuBox className={className} role="menu" aria-label={label}>
		{items.map((item, i) =>
			item ? (
				<MenuRow key={item.text} role="menuitem">
					<MenuIcon>{item.icon && <Icon name={item.icon} />}</MenuIcon>
					<MenuText $active={item.active}>
						<Check>
							{item.checked && (
								<Glyph width="9" height="9" viewBox="0 0 9 9">
									<path d="M1 4l2.500 3L8 1" stroke="#fff" strokeWidth="2" />
								</Glyph>
							)}
						</Check>
						{item.text}
						{item.sub && <SubArrow />}
					</MenuText>
				</MenuRow>
			) : (
				<MenuLine key={i} />
			),
		)}
	</MenuBox>
);

const Drawing = () => (
	<DrawingSvg width="996" height="496" viewBox="306 161 996 496">
		<defs>
			<filter id="drop" x="-20%" y="-20%" width="140%" height="160%">
				<feDropShadow dx="3" dy="4" stdDeviation="2" floodColor="#000" floodOpacity="0.700" />
			</filter>
		</defs>
		<g stroke="#8a6508" strokeWidth="1.200" fill="none">
			<path d="M420 340L418 357L425 366M415 371L419 371M416 371L418 383" />
			<path d="M440 345L442 356L448 361L456 363L471 363L472 352L484 353L485 346" />
			<path d="M491 346L492 358L497 366L494 375L497 382L505 388L513 392L517 390L528 397L529 394L521 381L530 373L530 368L537 359L550 347" />
			<path d="M614 346L615 368L621 386L617 393L614 393L614 407L618 418L622 437L629 461L640 468L655 478L661 487L665 496L668 504L676 510L682 520L694 523L694 557L691 558L691 575L695 580L694 602L690 612L691 628L694 640L697 657" />
			<path d="M783 394L790 404L796 412L784 420L770 426L770 433L822 433L850 433L868 437L892 435L948 439L952 455L958 460L975 459L1000 462L1015 461L1030 463L1052 459L1060 452L1058 434L1047 421L1047 408L1043 394" />
			<path d="M1095 507L1092 502L1080 499L1071 501L1069 514L1064 517L1057 526L1053 541L1050 536L1041 533L1030 524L1028 521L1016 511L1002 511L998 514L985 500L970 493L953 486L948 477L930 479L912 484L900 476L876 478L850 484L835 478L815 484L800 477L783 476L773 482L768 495L770 540L768 562L770 578L779 583L769 578L766 605L759 620L756 627L760 657" />
		</g>
		<g stroke="#00e676" strokeWidth="1.500" fill="none">
			<path d="M389 161L401 258L411 348L413 378L417 657" />
			<path d="M1075 390L1095 507L1302 562" />
		</g>
		<path d="M906 415Q914 500 925 570L940 657" stroke="#e8e8e8" strokeWidth="1.200" fill="none" />
		<circle cx="461.500" cy="471.500" r="107" stroke="#063cff" strokeWidth="4" fill="none" />
		<g stroke="#f00" fill="none" strokeWidth="1.500">
			<path d="M447 471.500H562" stroke="#c00" />
			<circle cx="447" cy="471" r="8" />
			<path d="M439 472a8 8 0 0 0 16 0z" fill="#f00" />
			<ellipse cx="430" cy="471.500" rx="6" ry="3" />
			<path d="M562 479a6 3 0 0 0 12 0z" fill="#f00" />
			<path d="M403 404L394 395M394 400V394H400" />
		</g>
		<path d="M562 471.500H697M562.500 464V479M389 388L393 393M393 389L389 392" stroke="#f08080" strokeWidth="1.500" />
		<StationText x="648" y="487">1+57.08</StationText>
		<g filter="url(#drop)" fill="#fc4444" stroke="none">
			<path d="M570 475L603 468L596 497Z" />
			<path d="M600 483L862 552" stroke="#fc4444" strokeWidth="9" strokeDasharray="30 9" />
			<path d="M551 541L582 529L579 558Z" />
			<path d="M586 544L856 566" stroke="#fc4444" strokeWidth="9" strokeDasharray="30 10" />
		</g>
		<g filter="url(#drop)">
			<StepText x="579" y="452">1</StepText>
			<StepText x="509" y="533">2</StepText>
		</g>
		<g stroke="#dedede" fill="none">
			<path d="M319.500 594V645M319.500 644.500H370M315.500 640.500h8v8h-8z" />
			<path d="M321 578L327.500 585L334 578M327.500 585V590" />
			<path d="M374 630L387 643M387 630L374 643" />
		</g>
	</DrawingSvg>
);

const Compass = () => (
	<Glyph width="92" height="96" viewBox="0 0 92 96" aria-hidden="true">
		<circle cx="46" cy="47" r="37" stroke="#4a5058" strokeWidth="9" />
		<rect x="29" y="29" width="35" height="35" fill="#b9bbbc" stroke="#8d9092" />
		<rect x="35" y="36" width="22" height="22" fill="#a6a9ad" stroke="none" />
		<CubeText x="46" y="51">TOP</CubeText>
		<WindText x="46" y="14">N</WindText>
		<WindText x="46" y="93">S</WindText>
		<WindText x="7" y="53">W</WindText>
		<WindText x="85" y="53">E</WindText>
	</Glyph>
);

const App = () => (
	<>
		<GlobalStyle />
		<Window>
			<TitleBar>
				<QuickAccess>
					{['file', 'folder', 'disk', 'matchProp', 'calc', 'plotter', 'undo', 'redo'].map((name) => (
						<Icon key={name} name={name} />
					))}
				</QuickAccess>
				<WorkspaceBox>
					<Icon name="gear" size={14} />
					<WorkspaceSelect aria-label="Workspace">
						<option>Civil 3D</option>
					</WorkspaceSelect>
				</WorkspaceBox>
				<WindowTitle>Autodesk Civil 3D 2020 &nbsp; LOT1 CIVIL SURF.dwg</WindowTitle>
				<SearchBox placeholder="Type a keyword or phrase" aria-label="Search" />
				<TitleIcons>
					<Icon name="binoculars" />
					<Icon name="person" />
				</TitleIcons>
				<UserName>Beka_Tchighla...</UserName>
				<TitleIcons $wide>
					<Icon name="plotter" />
					<Icon name="toolbox" />
					<Icon name="circle" />
				</TitleIcons>
			</TitleBar>
			<AppButton aria-label="Application menu">
				<Glyph width="20" height="20" viewBox="0 0 20 20">
					<path d="M0 10q6-1 8-5l3 4q-4 8-11 6z" fill="#2d9fe0" stroke="none" />
					<path d="M11 6h7l-3.500 4z" fill="#333" stroke="none" />
				</Glyph>
				3D
			</AppButton>

			<RibbonTabs>
				<TabList>
					{ribbonTabs.map((tab) => (
						<RibbonTab key={tab} $active={tab === 'Home'}>
							{tab}
						</RibbonTab>
					))}
				</TabList>
				<ContextTab>Geolocation</ContextTab>
				<ContextTab>Alignment</ContextTab>
				<Collapse aria-label="Minimize ribbon">
					<Glyph width="26" height="11" viewBox="0 0 26 11">
						<rect x="1" y="1" width="14" height="8" rx="2" fill="#fff" stroke="#333" />
						<path d="M5 7l3-3 3 3z" fill="#333" stroke="none" />
						<path d="M20 4h5l-2.500 3z" fill="#666" stroke="none" />
					</Glyph>
				</Collapse>
			</RibbonTabs>

			<Ribbon>
				<Panel $width={93}>
					<PalettesBody>
						<Toolspace>
							<Glyph width="34" height="34" viewBox="0 0 34 34">
								<path d="M8 30L22 12" stroke="#e3986a" strokeWidth="5" />
								<path d="M15 5q6-5 12 0l5 6-3 3-5-4-3 3z" fill="#777" stroke="#666" />
								<path d="M5 4l4 4-2 4-5-2q0 6 7 6l12 13q5 3 8-1 2-4-2-6L13 11q1-7-8-7z" fill="#fff" stroke="#666" />
							</Glyph>
							Toolspace
						</Toolspace>
						<PaletteGrid>
							{['prospector', 'gear', 'survey', 'toolbox', 'calc', 'propsPal'].map((name, i) => (
								<PaletteButton key={name} $on={i < 4} aria-label={name}>
									<Icon name={name} />
								</PaletteButton>
							))}
						</PaletteGrid>
					</PalettesBody>
					<PanelLabel $shift>Palettes<Arrow $big /></PanelLabel>
				</Panel>
				<Panel $width={129}>
					<PanelBody $pad={26}>
						{groundItems.map((item) => (
							<RibbonItem key={item[1]} item={item} />
						))}
					</PanelBody>
					<PanelLabel>Create Ground Data<Arrow $big /></PanelLabel>
				</Panel>
				<Panel $width={322}>
					<PanelBody $pad={8} $cols="106px 98px auto">
						{designItems.map((item) => (
							<RibbonItem key={item[1]} item={item} />
						))}
					</PanelBody>
					<PanelLabel>Create Design<Arrow $big /></PanelLabel>
				</Panel>
				<Panel $width={133}>
					<PanelBody $pad={14}>
						{profileItems.map((item) => (
							<RibbonItem key={item[1]} item={item} />
						))}
					</PanelBody>
					<PanelLabel>Profile &amp; Section Views</PanelLabel>
				</Panel>
				<Panel $width={118}>
					<PanelBody $pad={8} $cols="36px 40px auto">
						{drawTools.map(([name, arrow]) => (
							<ToolButton key={name} aria-label={name}>
								<Icon name={name} />
								{arrow ? <Arrow /> : null}
							</ToolButton>
						))}
					</PanelBody>
					<PanelLabel>Draw<Arrow $big /></PanelLabel>
				</Panel>
				<Panel $width={176}>
					<PanelBody $pad={8} $cols="72px 28px 42px auto">
						{modifyTools.map(([name, text, arrow]) => (
							<ToolButton key={name} aria-label={name}>
								<Icon name={name} />
								{text}
								{arrow ? <Arrow /> : null}
							</ToolButton>
						))}
					</PanelBody>
					<PanelLabel>Modify<Arrow $big /></PanelLabel>
				</Panel>
				<Panel $width={273}>
					<LayersBody>
						<BigButton>
							<Glyph width="34" height="34" viewBox="0 0 34 34">
								<path d="M12 2h18l-9 9H2zM6 15l-4 4h17l4-4M6 21l-4 4h17" />
								<rect x="21" y="16" width="12" height="16" fill="#fff" />
								<rect x="24" y="18" width="7" height="5" fill={BLUE} stroke="none" />
								<path d="M23 26h8M23 29h8" />
							</Glyph>
							<span>Layer</span>
							<span>Properties</span>
						</BigButton>
						<LayerColumn>
							<LayerBox>
								<Glyph width="74" height="18" viewBox="0 0 74 18">
									<circle cx="7" cy="7" r="5" fill={ORANGE} stroke="none" />
									<path d="M5 14.500h4" strokeWidth="3" />
									<circle cx="24" cy="9" r="4" fill={ORANGE} stroke="none" />
									<path d="M24 2v14M17 9h14M19 4l10 10M19 14L29 4" stroke={ORANGE} strokeWidth="1.500" />
									<path d="M37 8h9v8h-9z" fill={ORANGE} stroke="none" />
									<path d="M44 8V3h5v4" stroke={ORANGE} strokeWidth="2" />
									<rect x="57.500" y="3.500" width="13" height="13" fill="#fff" stroke="#000" />
								</Glyph>
								<LayerSelect aria-label="Layer">
									<option>0</option>
								</LayerSelect>
								<Arrow $big />
							</LayerBox>
							<LayerGrid>
								{layerTools.map((name) => (
									<ToolButton key={name} aria-label={name}>
										<Icon name={name} />
									</ToolButton>
								))}
							</LayerGrid>
						</LayerColumn>
					</LayersBody>
					<PanelLabel>Layers<Arrow $big /></PanelLabel>
				</Panel>
				<Panel $width={97}>
					<ClipBody>
						<BigButton>
							<Glyph width="34" height="34" viewBox="0 0 34 34">
								<path d="M4 6h20v25H4z" fill="#b08e62" stroke="none" />
								<path d="M9 4h10v4H9z" fill="#555" stroke="none" />
								<path d="M12 12h10l7 7v14H12z" fill="#fff" />
								<path d="M22 12v7h7" />
							</Glyph>
							<span>Paste</span>
							<Arrow />
						</BigButton>
						<PanelBody $pad={12}>
							{['cut', 'copyClip', 'matchProp'].map((name) => (
								<ToolButton key={name} aria-label={name}>
									<Icon name={name} />
								</ToolButton>
							))}
						</PanelBody>
					</ClipBody>
					<PanelLabel $shift>Clipboard</PanelLabel>
				</Panel>
			</Ribbon>

			<DocTabs>
				<DocTab>Start</DocTab>
				<DocTab $active>
					LOT1 CIVIL SURF*
					<Glyph width="9" height="9" viewBox="0 0 9 9">
						<path d="M1 1l7 7M8 1L1 8" strokeWidth="2" stroke="#777" />
					</Glyph>
				</DocTab>
				<NewTab aria-label="New tab">+</NewTab>
			</DocTabs>

			<Workspace>
				<ToolPalette>
					<PaletteMain>
						<PaletteTitle>ОБЛАСТЬ ИНСТРУМЕНТОВ</PaletteTitle>
						<PaletteBar>
							<Icon name="arrange" />
							<Icon name="panorama" />
							<HelpButton>?</HelpButton>
						</PaletteBar>
						<ViewBox>
							<ViewSelect aria-label="Drawing view">
								<option>Active Drawing View</option>
							</ViewSelect>
							<Chevron />
						</ViewBox>
						<Tree>
							<TreeList>
								{treeRows.map((row) => (
									<TreeRow key={row.text}>
										{[...row.cells].map((kind, i) => (
											<TreeCell key={i} kind={kind} />
										))}
										<TreeIcon><Icon name={row.icon} /></TreeIcon>
										{row.flag && (
											<Glyph width="19" height="20" viewBox="0 0 19 20">
												<path d="M.5 5h5l-5 5z" fill="#ffc20e" stroke="#6b4c00" />
											</Glyph>
										)}
										<TreeText $selected={row.selected}>{row.text}</TreeText>
									</TreeRow>
								))}
							</TreeList>
							<ScrollBar>
								<Chevron $up />
								<Thumb />
								<Chevron />
							</ScrollBar>
						</Tree>
						<Preview />
					</PaletteMain>
					<SideTabs>
						{['Prospector', 'Settings', 'Survey', 'Toolbox'].map((tab, i) => (
							<SideTab key={tab} $active={i === 0}>
								{tab}
							</SideTab>
						))}
					</SideTabs>
				</ToolPalette>

				<Canvas>
					<Drawing />
					<ViewLabel>[−][Top][2D Wireframe]</ViewLabel>
					<ViewControls>
						<Glyph width="52" height="14" viewBox="0 0 52 14">
							<path d="M1 9.500h11" stroke="#fff" strokeWidth="3" />
							<path d="M22 4.500h7v7h-7zM24 2h8v8" stroke="#fff" strokeWidth="1.500" />
							<path d="M42 3l7 8M49 3l-7 8" stroke="#fff" strokeWidth="2" />
						</Glyph>
					</ViewControls>
					<CompassBox><Compass /></CompassBox>
					<WcsButton>
						WCS
						<Glyph width="10" height="6" viewBox="0 0 10 6">
							<path d="M1 1h8L5 5z" stroke="#7a7e88" />
						</Glyph>
					</WcsButton>
					<NavBar>
						<Glyph width="30" height="212" viewBox="0 0 30 212">
							<g stroke="#3d4250">
								<circle cx="26" cy="5" r="3.500" />
								<path d="M5 30A11 11 0 1 1 16 41M16 19h10v11a10 10 0 0 1-10 11M5 30a11 11 0 0 0 11 11" />
								<circle cx="16" cy="30" r="6" strokeWidth="2" />
								<path d="M13 50h6l-3 3z" fill="#3d4250" />
								<path d="M3 57h25" stroke="#767a80" />
								<path d="M6 73q4 1 5 4l-1-12q2-2 3 0l1 7 0-9q2-2 3 0v9l2-8q2-1 3 1l-1 9 4-5q2 0 1 2l-5 9q-2 5-8 5-5-1-6-6z" />
								<path d="M5 91l14 14M19 91L5 105M5 95v-4h4M15 91h4v4M5 101v4h4" />
								<circle cx="21" cy="105" r="5" strokeWidth="2" />
								<path d="M24 109l4 5" strokeWidth="3" />
								<path d="M13 120h6l-3 3zM13 157h6l-3 3z" fill="#3d4250" />
								<path d="M14 129l-4 5h3v14h4v-14h3z" />
								<path d="M10 138q-6 2-3 5 7 4 16 1 5-2 0-5" />
								<path d="M4 169h6v5H4zM12 169h6v5h-6zM20 169h6v5h-6zM4 178h17v13H4z" />
								<path d="M10 181l6 3.500-6 3.500z" fill="#3d4250" />
								<circle cx="26" cy="206" r="3.500" />
							</g>
						</Glyph>
					</NavBar>
				</Canvas>

				<SideToolbar>
					<Glyph width="16" height="6" viewBox="0 0 16 6">
						<path d="M1 1.500h12M1 4.500h12" strokeDasharray="1 1" />
					</Glyph>
					{sideTools.map((name, i) =>
						name === '|' ? <SideLine key={i} /> : <Icon key={i} name={name} />,
					)}
				</SideToolbar>
			</Workspace>

			<LayoutTabs>
				<LayoutTab $active>Model</LayoutTab>
				<LayoutTab>Layout1</LayoutTab>
				<LayoutTab>Layout2</LayoutTab>
				<LayoutTab>+</LayoutTab>
			</LayoutTabs>
			<StatusBar>
				{statusItems.map((item, i) => (
					<StatusItem key={i} $width={item.w} $on={item.on} $bold={item.bold}>
						{item.icon && <Icon name={item.icon} />}
						{item.text}
						{item.arrow && <Arrow $big />}
					</StatusItem>
				))}
			</StatusBar>

			<Balloon>
				<BalloonTitle>
					<InfoMark>i</InfoMark>
					Unreconciled New Layers
				</BalloonTitle>
				<BalloonText>New layers were found that may need to be reconciled.</BalloonText>
				<BalloonLink href="#layers">View unreconciled new layers in Layer Properties Manager</BalloonLink>
				<BalloonClose aria-label="Close">
					<Glyph width="8" height="8" viewBox="0 0 8 8">
						<path d="M1 1l6 6M7 1L1 7" stroke="#000" strokeWidth="2" />
					</Glyph>
				</BalloonClose>
				<BalloonTail width="32" height="18" viewBox="0 0 32 18">
					<path d="M4 0L29 14L21 0" fill="#ffffe1" stroke="#000" />
				</BalloonTail>
			</Balloon>

			<CommandWindow>
				<CommandHandle>
					<Glyph width="18" height="60" viewBox="0 0 18 60">
						<path d="M0 2h18M0 5h18" strokeDasharray="2 1" strokeWidth="2" />
						<path d="M4 13l8 9M12 13l-8 9" strokeWidth="2" />
						<path d="M2 47q-1 3 2 2l7-9q4 0 5-4l-3 1-2-2 2-3q-5 0-4 5z" />
					</Glyph>
				</CommandHandle>
				<CommandMain>
					<CommandLog>
						<div>Specify curve direction [Clockwise/cOunterclockwise] &lt;Clockwise&gt;: C</div>
						<div>Specify radius or [Degree of curvature] &lt;492.00m&gt;: 25</div>
						<div>Specify center point:</div>
					</CommandLog>
					<CommandLine>
						<Glyph width="28" height="14" viewBox="0 0 28 14">
							<path d="M.5 1.500h15v11H.5zM3 5l3 2-3 2M7 10h4" />
							<path d="M20 5h7l-3.500 5z" fill="#555" stroke="none" />
						</Glyph>
						<CommandInput placeholder="Type a command" aria-label="Command" />
						<Glyph width="8" height="6" viewBox="0 0 8 6">
							<path d="M1 5l3-4 3 4z" fill={GRAY} stroke="none" />
						</Glyph>
					</CommandLine>
				</CommandMain>
			</CommandWindow>

			<Dialog role="dialog" aria-label="Alignment Layout Tools">
				<DialogTitle>
					<DialogName>Alignment Layout Tools - Tpacca 2</DialogName>
					<DialogButton aria-label="Pin">
						<Glyph width="16" height="16" viewBox="0 0 16 16">
							<path d="M6 9l-5 5" strokeWidth="2" />
							<ellipse cx="8" cy="8" rx="5" ry="5" fill="#f4f4f4" stroke="#777" />
							<circle cx="11" cy="5" r="4" fill="#e6e6e6" stroke="#888" />
						</Glyph>
					</DialogButton>
					<DialogButton aria-label="Help">?</DialogButton>
					<DialogButton $close aria-label="Close">
						<Glyph width="14" height="12" viewBox="0 0 14 12">
							<path d="M2 2l10 8M12 2L2 10" stroke="#803020" strokeWidth="5" />
							<path d="M2 2l10 8M12 2L2 10" stroke="#fff" strokeWidth="3" />
						</Glyph>
					</DialogButton>
				</DialogTitle>
				<DialogBody>
					<DialogTools>
						{layoutTools.map(([name, kind], i) =>
							name === '|' ? (
								<ToolLine key={i} />
							) : (
								<LayoutTool key={name} $kind={kind} aria-label={name}>
									<Icon name={name} />
									{(kind === 'split' || kind === 'on') && <BlackArrow />}
								</LayoutTool>
							),
						)}
					</DialogTools>
					<DialogStatus>Fixed Curve (Center point and radius)</DialogStatus>
				</DialogBody>
			</Dialog>
			<CurveMenu items={curveMenu} label="Curves" />
			<FixedMenu items={fixedMenu} label="More fixed curves" />

			<TornRight width="40" height="707" viewBox="1301 0 40 707" aria-hidden="true">
				<path
					d="M1341 0H1316L1312 8L1314 14L1311 18L1316 26L1319 33L1325 40L1330 50L1325 59L1322 64L1320 72L1316 78L1318 85L1323 92L1325 106L1322 112L1323 120L1318 130L1313 137L1317 145L1323 151L1331 156L1325 161L1326 168L1323 176L1325 184L1322 192L1325 201L1322 214L1327 220L1322 232L1328 246L1324 262L1322 272L1327 282L1323 294L1327 308L1326 320L1321 330L1326 345L1324 360L1320 368L1327 385L1325 398L1329 408L1330 416L1323 425L1329 438L1326 452L1328 460L1322 470L1326 482L1322 492L1327 505L1325 520L1327 530L1321 545L1330 560L1325 570L1329 580L1320 586L1316 593L1318 602L1319 618L1322 628L1322 642L1327 648L1320 660L1314 668L1311 680V707H1341Z"
					fill="#fff"
					stroke="none"
				/>
				<path d="M1330.500 234V243M1331.500 385V392M1331.500 400V408M1330.500 436V443" stroke="#ccc" />
			</TornRight>
			<TornBottom viewBox="0 670 1341 37" preserveAspectRatio="none" aria-hidden="true">
				<path
					d="M0 680L4 690L10 702L15 690L20 680L26 690L33 701L45 702L52 696L60 692L80 693L90 695L100 688L115 692L125 687L140 686L150 689L155 694L163 686L175 684L188 688L193 693L203 686L213 690L220 695L228 689L236 688L251 694L266 690L280 688L297 695L305 690L312 687L322 690L333 694L350 690L373 696L390 692L404 695L412 690L424 687L435 692L455 693L462 688L470 687L480 692L491 689L516 697L524 691L532 688L547 692L577 690L585 686L593 685L608 692L620 689L639 687L648 692L659 695L672 688L690 692L697 689L705 682L710 680L716 688L731 694L745 689L761 692L775 687L792 685L800 691L812 695L822 688L835 691L848 695L868 693L880 689L894 687L906 684L914 686L919 677L925 688L935 697L945 689L955 691L965 687L975 688L986 693L1000 690L1015 688L1033 692L1050 690L1067 695L1074 692L1080 687L1100 685L1107 695L1125 692L1140 695L1149 690L1157 682L1170 685L1180 688L1190 692L1200 697L1215 692L1230 697L1247 695L1257 693L1267 688L1280 690L1293 693L1310 688L1312 680H1341V707H0Z"
					fill="#fff"
					stroke="none"
				/>
			</TornBottom>
		</Window>
	</>
);

export default App;

/* Styles */
const GlobalStyle = createGlobalStyle`
	*, *::before, *::after {
		box-sizing: border-box;
	}
	body {
		margin: 0;
		font-family: 'Open Sans', 'Noto Sans', sans-serif;
		font-size: 11px;
		line-height: 16px;
		color: #3c3c3c;
		background: #fff;
	}
	button, input, select {
		font: inherit;
		color: inherit;
		background: none;
		border: 0;
		padding: 0;
		margin: 0;
		appearance: none;
	}
`;

const dialogFont = css`
	font-family: 'Noto Sans', 'Open Sans', sans-serif;
	font-size: 11px;
`;

const Glyph = styled.svg`
	flex: none;
	fill: none;
	stroke: ${GRAY};
	stroke-width: 1;
`;

const Window = styled.div`
	position: relative;
	display: flex;
	flex-direction: column;
	height: 100vh;
	overflow: hidden;
	background: #d9d9d9;
`;

const Arrow = styled.i`
	flex: none;
	border: solid transparent;
	border-width: ${({ $big }) => ($big ? '4px 4px 0' : '3px 3px 0')};
	border-top-color: #666;
	margin-left: ${({ $big }) => ($big ? 6 : 2)}px;
`;

const Chevron = styled.i`
	width: 7px;
	height: 7px;
	margin: 4px 6px;
	border: solid #444;
	border-width: 0 1px 1px 0;
	transform: rotate(${({ $up }) => ($up ? 225 : 45)}deg);
`;

const TitleBar = styled.header`
	display: flex;
	align-items: center;
	flex: none;
	height: 20px;
	margin-top: -10px;
	padding-left: 30px;
	background: #d0d0d0;
`;

const QuickAccess = styled.div`
	display: flex;
	gap: 8px;
	width: 212px;
	overflow: hidden;
`;

const WorkspaceBox = styled.div`
	display: flex;
	align-items: center;
	gap: 4px;
	width: 180px;
	height: 20px;
	padding-left: 4px;
	background: #fff;
	border: 1px solid #aaa;
`;

const WorkspaceSelect = styled.select`
	flex: 1;
`;

const WindowTitle = styled.span`
	width: 295px;
	margin-left: 53px;
	white-space: nowrap;
`;

const SearchBox = styled.input`
	width: 178px;
	height: 19px;
	padding: 0 4px;
	background: #fff;
	font-style: italic;
`;

const UserName = styled.span`
	margin-left: 5px;
	color: #222;
`;

const TitleIcons = styled.div`
	display: flex;
	gap: ${({ $wide }) => ($wide ? 14 : 8)}px;
	margin-left: ${({ $wide }) => ($wide ? 20 : 5)}px;
`;

const AppButton = styled.button`
	position: absolute;
	top: 0;
	left: 0;
	width: 21px;
	height: 29px;
	background: linear-gradient(#aaa, #444);
	border: solid #111;
	border-width: 0 1px 2px 0;
	color: #111;
	font-size: 9px;
	line-height: 8px;
	font-weight: 700;
`;

const RibbonTabs = styled.nav`
	display: flex;
	align-items: center;
	flex: none;
	height: 23px;
	padding: 4px 0 0 26px;
`;

const TabList = styled.div`
	display: flex;
	justify-content: space-between;
	flex: 0 0 983px;
`;

const RibbonTab = styled.button`
	height: 19px;
	padding: 0 9px;
	border-radius: 3px 3px 0 0;
	color: #777;
	white-space: nowrap;
	${({ $active }) =>
		$active &&
		css`
			color: #333;
			background: #f5f5f5;
		`}
`;

const ContextTab = styled.button`
	height: 16px;
	margin-left: 2px;
	padding: 0 9px;
	line-height: 14px;
	color: #26485c;
	background: #5cafdb;
	border: 1px solid #1c94dc;
`;

const Collapse = styled.button`
	display: flex;
	margin-left: 21px;
`;

const Ribbon = styled.section`
	display: flex;
	flex: none;
	height: 97px;
	background: #f5f5f5;
`;

const Panel = styled.div`
	display: flex;
	flex-direction: column;
	flex: 0 0 ${({ $width }) => $width}px;
	border-right: 1px solid #d6d6d6;
`;

const PanelBody = styled.div`
	display: grid;
	grid-template-columns: ${({ $cols }) => $cols || 'auto'};
	grid-template-rows: repeat(3, 24px);
	padding: 4px 0 0 ${({ $pad }) => $pad}px;
`;

const PanelLabel = styled.div`
	display: flex;
	align-items: center;
	justify-content: center;
	height: 18px;
	margin-top: auto;
	white-space: nowrap;
	padding-right: ${({ $shift }) => ($shift ? 18 : 0)}px;
`;

const ToolButton = styled.button`
	display: flex;
	align-items: center;
	gap: 5px;
	white-space: nowrap;
`;

const PalettesBody = styled.div`
	display: flex;
	gap: 2px;
	padding-top: 4px;
`;

const Toolspace = styled.button`
	display: flex;
	flex-direction: column;
	align-items: center;
	gap: 3px;
	width: 56px;
	height: 72px;
	margin-left: -14px;
	background: #dcebf5;
	border: 1px solid ${BLUE};
`;

const PaletteGrid = styled.div`
	display: grid;
	grid-template-columns: 24px 24px;
	grid-auto-rows: 22px;
	row-gap: 2px;
`;

const PaletteButton = styled.button`
	display: grid;
	place-items: center;
	${({ $on }) =>
		$on &&
		css`
			background: #dcebf5;
			border: 1px solid ${BLUE};
		`}
`;

const LayersBody = styled.div`
	display: flex;
	padding: 5px 1px 0 5px;
`;

const BigButton = styled.button`
	display: flex;
	flex-direction: column;
	align-items: center;
	flex: none;
	line-height: 15px;

	span:first-of-type {
		margin-top: 4px;
	}

	${Arrow} {
		margin: 2px 0 0;
	}
`;

const LayerColumn = styled.div`
	flex: 1;
	margin-left: 4px;
`;

const LayerBox = styled.div`
	display: flex;
	align-items: center;
	height: 22px;
	padding: 0 4px 0 5px;
	background: #fff;
	border: 1px solid #d0d0d0;
`;

const LayerSelect = styled.select`
	flex: 1;
	padding-left: 2px;
`;

const LayerGrid = styled.div`
	display: grid;
	grid-template-columns: repeat(5, 24px);
	grid-auto-rows: 24px;
	padding-left: 4px;
`;

const ClipBody = styled.div`
	display: flex;
	padding-left: 12px;

	${BigButton} {
		padding-top: 5px;
	}
`;

const DocTabs = styled.nav`
	display: flex;
	align-items: flex-end;
	flex: none;
	height: 31px;
	padding-left: 2px;
	border-bottom: 4px solid #f5f5f5;
`;

const DocTab = styled.button`
	display: flex;
	align-items: center;
	gap: 8px;
	height: 22px;
	width: 123px;
	margin-right: 1px;
	padding: 0 9px;
	color: #777;
	background: #e8e8e8;
	border-radius: 8px 12px 8px 0;
	white-space: nowrap;
	${({ $active }) =>
		$active &&
		css`
			width: 132px;
			color: #333;
			background: #f5f5f5;
			border-radius: 8px 12px 0 0;
		`}
`;

const NewTab = styled.button`
	width: 22px;
	height: 14px;
	margin: 0 0 4px 5px;
	line-height: 12px;
	font-size: 16px;
	color: #777;
	background: #e8e8e8;
	border-radius: 4px 8px 8px 8px;
`;

const Workspace = styled.main`
	display: flex;
	flex: 1;
	min-height: 0;
	background: #f5f5f5;
`;

const ToolPalette = styled.aside`
	display: flex;
	flex: 0 0 306px;
	padding-bottom: 4px;
`;

const PaletteMain = styled.div`
	display: flex;
	flex-direction: column;
	width: 283px;
	color: #111;
	${dialogFont}
`;

const PaletteTitle = styled.h2`
	margin: 2px 0 0;
	height: 20px;
	font-size: 11px;
	line-height: 18px;
	font-weight: 400;
	color: #444;
	background: #d9d9d9;
	border-radius: 0 3px 0 0;
`;

const PaletteBar = styled.div`
	display: flex;
	align-items: center;
	justify-content: flex-end;
	gap: 11px;
	height: 30px;
	padding-right: 6px;
`;

const HelpButton = styled.button`
	width: 16px;
	height: 16px;
	line-height: 14px;
	font-weight: 700;
	border: 1px solid #444;
`;

const ViewBox = styled.div`
	display: flex;
	align-items: center;
	height: 21px;
	background: #e1e1e1;
	border: 1px solid #999;
	border-left: 0;
`;

const ViewSelect = styled.select`
	flex: 1;
	margin-left: -18px;
`;

const Tree = styled.div`
	display: flex;
	flex: 1;
	min-height: 0;
	margin-top: 3px;
	background: #fff;
	border: solid #828790;
	border-width: 1px 1px 1px 0;
	overflow: hidden;
`;

const TreeList = styled.div`
	flex: 1;
	padding-left: 4px;
`;

const TreeRow = styled.div`
	display: flex;
	align-items: center;
	height: 20px;
`;

const TreeIcon = styled.span`
	display: flex;
	width: 21px;
	padding-left: 2px;
`;

const TreeText = styled.span`
	padding: 1px 4px;
	line-height: 18px;
	white-space: nowrap;
	color: #000;
	${({ $selected }) =>
		$selected &&
		css`
			flex: 1;
			background: #9d9d9d;
		`}
`;

const ScrollBar = styled.div`
	display: flex;
	flex-direction: column;
	width: 17px;
	padding: 4px 1px;
	background: #f0f0f0;

	${Chevron} {
		margin: 4px;
	}
`;

const Thumb = styled.div`
	height: 110px;
	margin: 23px 0 auto;
	background: #cdcdcd;
`;

const Preview = styled.div`
	height: 94px;
	margin-top: 7px;
	border: solid #999;
	border-width: 1px 1px 1px 0;
`;

const SideTabs = styled.div`
	display: flex;
	flex-direction: column;
	padding-top: 24px;
`;

const SideTab = styled.button`
	width: 20px;
	height: 112px;
	font-size: 12px;
	line-height: 20px;
	color: #777;
	background: #d9d9d9;
	border: 1px solid #b4b4b4;
	border-right: 0;
	border-radius: 4px 0 0 4px;
	writing-mode: vertical-rl;
	transform: rotate(180deg);
	${({ $active }) =>
		$active &&
		css`
			color: #444;
			background: #f5f5f5;
		`}
`;

const Canvas = styled.section`
	position: relative;
	flex: 1;
	min-width: 0;
	overflow: hidden;
	background: #212830;
`;

const DrawingSvg = styled.svg`
	display: block;
`;

const StationText = styled.text`
	font: 13px Roboto, sans-serif;
	fill: #ee8080;
`;

const StepText = styled.text`
	font: bold 48px 'Liberation Sans', Arial, sans-serif;
	fill: #fc4444;
	stroke: #fff;
	stroke-width: 8px;
	stroke-linejoin: round;
	paint-order: stroke;
`;

const CubeText = styled.text`
	font: bold 9px Roboto, sans-serif;
	fill: #4d545b;
	stroke: none;
	text-anchor: middle;
`;

const WindText = styled.text`
	font: bold 14px 'Liberation Sans', Arial, sans-serif;
	fill: #b8bbbd;
	stroke: none;
	text-anchor: middle;
`;

const ViewLabel = styled.span`
	position: absolute;
	top: 6px;
	left: 3px;
	color: #e4e4e4;
	${dialogFont}
`;

const ViewControls = styled.div`
	position: absolute;
	top: 8px;
	right: 11px;
`;

const CompassBox = styled.div`
	position: absolute;
	top: 35px;
	right: 13px;
`;

const WcsButton = styled.button`
	position: absolute;
	top: 143px;
	right: 36px;
	display: flex;
	align-items: center;
	justify-content: center;
	gap: 6px;
	width: 48px;
	height: 17px;
	color: #5c6068;
	line-height: 15px;
	background: #a0a3ae;
	border: 1px solid #b4b6bf;
	border-radius: 4px;
`;

const NavBar = styled.div`
	position: absolute;
	top: 186px;
	right: 4px;
	width: 32px;
	height: 212px;
	background: rgba(150, 150, 150, 0.500);
	border: 1px solid #6d7074;
	border-radius: 4px;
`;

const SideToolbar = styled.aside`
	display: flex;
	flex-direction: column;
	gap: 6px;
	flex: 0 0 35px;
	margin-left: 4px;
	padding: 1px 0 0 1px;
	border-left: 1px solid #b4b4b4;
	overflow: hidden;
`;

const SideLine = styled.hr`
	flex: none;
	width: 12px;
	margin: 0 0 0 2px;
	border: 0;
	border-top: 1px solid #999;
`;

const LayoutTabs = styled.nav`
	display: flex;
	flex: none;
	height: 23px;
	border-top: 1px solid #bbb;
`;

const LayoutTab = styled.button`
	height: 17px;
	margin-right: 2px;
	padding: 0 12px 0 10px;
	font-size: 12px;
	color: #777;
	background: #e6e6e6;
	border-radius: 0 0 12px 4px;
	${({ $active }) =>
		$active &&
		css`
			padding-left: 3px;
			font-size: 11px;
			font-weight: 700;
			color: #333;
			background: #f5f5f5;
		`}
`;

const StatusBar = styled.footer`
	display: flex;
	gap: 3px;
	flex: none;
	height: 27px;
	padding-left: 203px;
`;

const StatusItem = styled.div`
	display: flex;
	align-items: center;
	justify-content: center;
	gap: 4px;
	flex: 0 0 ${({ $width }) => $width}px;
	height: 22px;
	background: ${({ $on }) => ($on ? '#cfe4f7' : '#f5f5f5')};
	border: 1px solid ${({ $on }) => ($on ? '#5a8fc0' : '#f5f5f5')};
	font-weight: ${({ $bold }) => ($bold ? 700 : 400)};
`;

const Balloon = styled.div`
	position: absolute;
	top: 592px;
	right: -14px;
	width: 357px;
	height: 81px;
	padding: 9px 14px;
	color: #000;
	background: #ffffe1;
	border: 1px solid #000;
	border-radius: 14px;
	white-space: nowrap;
	${dialogFont}
`;

const BalloonTitle = styled.div`
	display: flex;
	align-items: center;
	gap: 11px;
	margin: 0 0 6px -6px;
	font-weight: 700;
`;

const InfoMark = styled.span`
	width: 15px;
	height: 15px;
	line-height: 15px;
	text-align: center;
	color: #fff;
	background: #777;
	border-radius: 50%;
`;

const BalloonText = styled.div`
	margin-bottom: 5px;
`;

const BalloonLink = styled.a`
	color: #00f;
`;

const BalloonClose = styled.button`
	position: absolute;
	top: 9px;
	left: 307px;
	display: grid;
	place-items: center;
	width: 16px;
	height: 16px;
	border: 1px solid #999;
	background: #fff;
`;

const BalloonTail = styled.svg`
	position: absolute;
	top: 79px;
	left: 231px;
`;

const CommandWindow = styled.div`
	position: absolute;
	top: 586px;
	left: 506px;
	display: flex;
	width: 596px;
	height: 71px;
	color: #111;
	font: 12px 'DejaVu Sans Mono', monospace;
	border-top: 2px solid rgba(200, 200, 200, 0.700);
	border-radius: 4px 0 0 4px;
	overflow: hidden;
`;

const CommandHandle = styled.div`
	width: 25px;
	padding: 4px 3px;
	background: rgba(215, 215, 215, 0.710);
`;

const CommandMain = styled.div`
	flex: 1;
	display: flex;
	flex-direction: column;
`;

const CommandLog = styled.div`
	flex: 1;
	padding: 2px 2px;
	line-height: 15px;
	white-space: nowrap;
	background: rgba(255, 255, 0, 0.710);
`;

const CommandLine = styled.div`
	display: flex;
	align-items: center;
	gap: 5px;
	height: 21px;
	padding: 0 4px;
	background: rgba(255, 255, 255, 0.710);
	border: solid rgba(140, 140, 150, 0.500);
	border-width: 1px 0;
`;

const CommandInput = styled.input`
	flex: 1;
	font-style: italic;

	&::placeholder {
		color: #555;
	}
`;

const Dialog = styled.section`
	position: absolute;
	top: 126px;
	left: 591px;
	width: 641px;
	height: 87px;
	padding: 0 6px 6px;
	color: #111;
	background: linear-gradient(#98b4d2, #b9d1ea 34px);
	border: 1px solid #111;
	border-right-color: #42d0f2;
	border-bottom-color: #42d0f2;
`;

const DialogTitle = styled.div`
	display: flex;
	height: 30px;
	margin-right: -6px;
`;

const DialogName = styled.h3`
	flex: 1;
	margin: 0;
	padding-top: 10px;
	font-size: 12px;
	line-height: 18px;
	font-weight: 400;
`;

const DialogButton = styled.button`
	display: grid;
	place-items: center;
	width: ${({ $close }) => ($close ? 37 : 25)}px;
	height: 18px;
	font-size: 14px;
	line-height: 16px;
	font-weight: 700;
	color: #fff;
	text-shadow: 0 0 2px #222, 0 0 1px #222;
	background: ${({ $close }) =>
		$close ? 'linear-gradient(#e09a8b, #c03a20 50%, #d0614b)' : 'linear-gradient(#c5d5e8, #92aac6)'};
	border: solid #47607c;
	border-width: 0 0 1px 1px;
`;

const DialogBody = styled.div`
	background: #f0f0f0;
`;

const DialogTools = styled.div`
	display: flex;
	align-items: center;
	gap: 8px;
	height: 27px;
	padding-left: 7px;
	border-bottom: 1px solid #ccc;
`;

const LayoutTool = styled.button`
	display: flex;
	align-items: center;
	justify-content: space-between;
	flex: none;
	height: 21px;
	${({ $kind }) =>
		$kind === 'split' &&
		css`
			width: 31px;
			margin-right: 4px;
		`}
	${({ $kind }) =>
		$kind === 'on' &&
		css`
			width: 37px;
			margin-right: 4px;
			padding: 0 2px;
			background: linear-gradient(90deg, #cce4f7 21px, #005499 21px, #005499 22px, #cce4f7 22px);
			border: 1px solid #005499;
		`}
	${({ $kind }) =>
		$kind === 'wide' &&
		css`
			margin-right: 6px;
		`}
`;

const BlackArrow = styled.i`
	border: solid transparent;
	border-width: 5px 5px 0;
	border-top-color: #000;
`;

const ToolLine = styled.i`
	flex: none;
	width: 1px;
	height: 24px;
	margin: 0 2px;
	background: #999;
`;

const DialogStatus = styled.div`
	height: 22px;
	padding: 3px 2px;
	${dialogFont}
`;

const MenuBox = styled.div`
	position: absolute;
	padding: 2px 3px;
	color: #000;
	background: #fff;
	border: 1px solid #999;
	outline: 1px solid #f0f0f0;
	outline-offset: -3px;
	box-shadow: 3px 3px 4px rgba(0, 0, 0, 0.500);
	${dialogFont}
`;

const MenuIcon = styled.span`
	display: grid;
	place-items: center;
	flex: 0 0 21px;
	height: 100%;
	background: linear-gradient(90deg, #fbfbfb, #e8e8ea);
`;

const MenuRow = styled.button`
	display: flex;
	width: 100%;
	height: 20px;
	text-align: left;
`;

const MenuText = styled.span`
	display: flex;
	align-items: center;
	flex: 1;
	height: 20px;
	margin-left: 2px;
	white-space: nowrap;
	${({ $active }) =>
		$active &&
		css`
			color: #fff;
			background: #0078d7;
		`}
`;

const Check = styled.span`
	display: flex;
	width: 16px;
	padding-left: 3px;
`;

const SubArrow = styled.i`
	margin: 0 7px 0 auto;
	border: solid transparent;
	border-width: 4px 0 4px 4px;
	border-left-color: currentColor;
`;

const MenuLine = styled.hr`
	height: 1px;
	margin: 4px 2px 4px 24px;
	border: 0;
	background: linear-gradient(90deg, #ddd, #999, #ddd);
`;

const CurveMenu = styled(Menu)`
	top: 182px;
	left: 774px;
	width: 377px;
	height: 213px;
`;

const FixedMenu = styled(Menu)`
	top: 202px;
	left: 402px;
	width: 375px;
	height: 146px;
`;

const TornRight = styled.svg`
	position: absolute;
	top: 0;
	right: 0;
	pointer-events: none;
`;

const TornBottom = styled.svg`
	position: absolute;
	bottom: 0;
	left: 0;
	width: 100%;
	height: 37px;
	pointer-events: none;
`;
